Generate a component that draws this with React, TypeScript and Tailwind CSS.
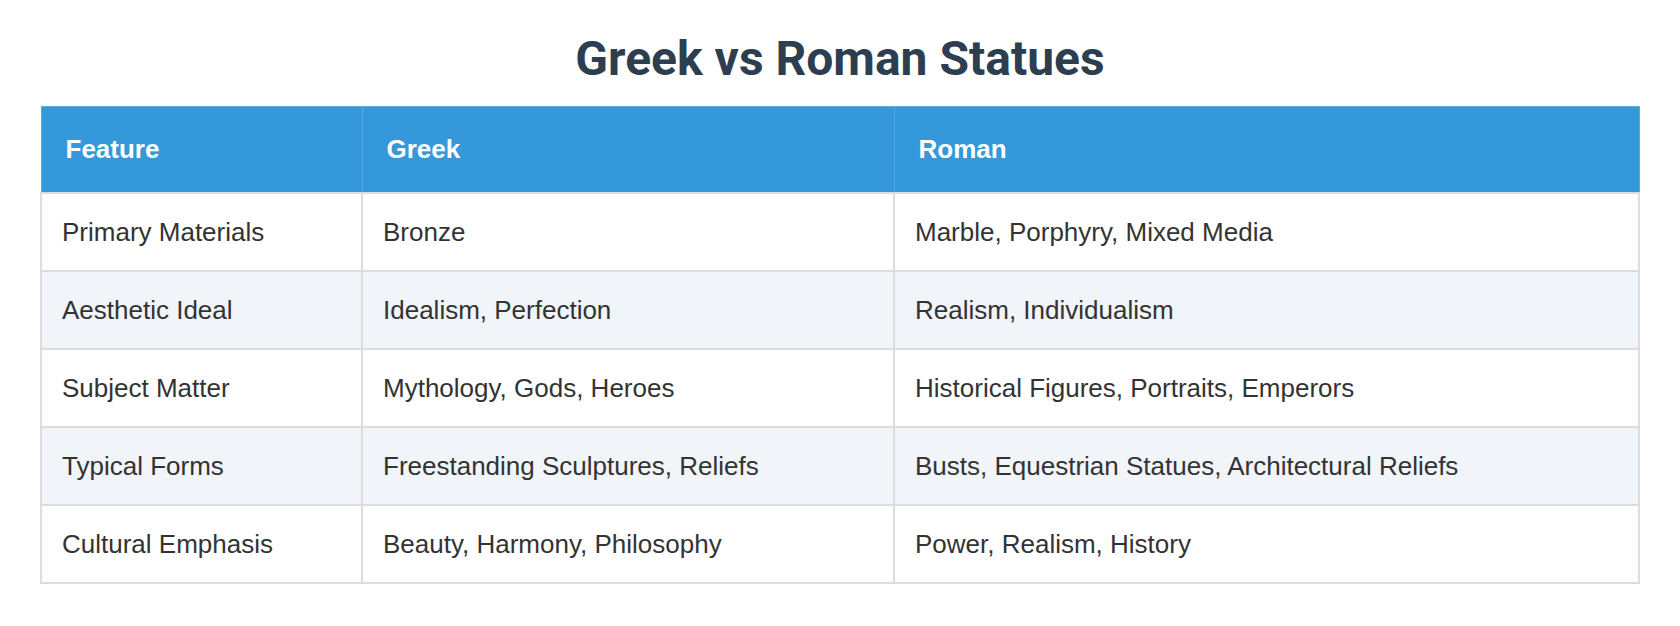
const rows = [
  ["Primary Materials", "Bronze", "Marble, Porphyry, Mixed Media"],
  ["Aesthetic Ideal", "Idealism, Perfection", "Realism, Individualism"],
  ["Subject Matter", "Mythology, Gods, Heroes", "Historical Figures, Portraits, Emperors"],
  ["Typical Forms", "Freestanding Sculptures, Reliefs", "Busts, Equestrian Statues, Architectural Reliefs"],
  ["Cultural Emphasis", "Beauty, Harmony, Philosophy", "Power, Realism, History"],
]

export default function App() {
  return (
    <main className="min-h-screen bg-white pt-[31px] font-['Liberation_Sans',Arial,sans-serif]">
      <h1 className="text-center font-['Roboto',sans-serif] text-[48px] font-bold leading-[56px] text-[#2c3e50]">
        Greek vs Roman Statues
      </h1>
      <table className="mx-auto mt-[19px] w-[1598px] table-fixed border-collapse text-[26px]">
        <colgroup>
          <col className="w-[321px]" />
          <col className="w-[532px]" />
          <col className="w-[745px]" />
        </colgroup>
        <thead>
          <tr className="h-[86px] bg-[#3498db] text-left text-white">
            {["Feature", "Greek", "Roman"].map((h) => (
              <th key={h} className="border border-[#55aae3] px-[24px] font-bold">
                {h}
              </th>
            ))}
          </tr>
        </thead>
        <tbody>
          {rows.map((r, i) => (
            <tr key={r[0]} className={`h-[78px] ${i % 2 === 1 ? "bg-[#f1f4f9]" : "bg-white"}`}>
              {r.map((c, j) => (
                <td key={j} className="border-2 border-[#dddddd] pl-[20px] pr-[19px] leading-[30px] text-[#333333]">
                  {c}
                </td>
              ))}
            </tr>
          ))}
        </tbody>
      </table>
    </main>
  )
}
